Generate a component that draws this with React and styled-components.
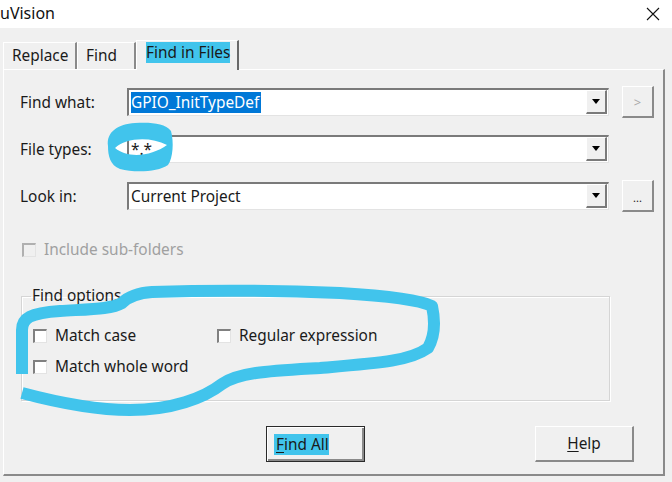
import React from "react";
import styled, { createGlobalStyle, css } from "styled-components";

const Global = createGlobalStyle`
  html, body { margin: 0; padding: 0; }
  body {
    background: #f0f0f0;
    font-family: "Noto Sans", "Open Sans", sans-serif;
    font-size: 15.4px;
    color: #1a1a1a;
    overflow: hidden;
  }
`;

const Window = styled.div`
  position: relative;
  width: 672px;
  height: 482px;
  background: #f0f0f0;
  overflow: hidden;
`;

const TitleBar = styled.div`
  height: 28px;
  background: #ffffff;
  display: flex;
  align-items: center;
  justify-content: space-between;
  padding: 0 12px 3px 0;
  box-sizing: border-box;
`;

const Title = styled.span`
  font-size: 16px;
  margin-left: 0;
  color: #111;
`;

const CloseIcon = styled.svg`
  width: 14px;
  height: 14px;
  margin-top: 3px;
`;

const Body = styled.div`
  padding: 12px 7px 0 3px;
`;

const TabStrip = styled.div`
  display: flex;
  align-items: flex-end;
  height: 29px;
  position: relative;
  z-index: 1;
`;

const Tab = styled.div`
  box-sizing: border-box;
  width: ${(p) => p.$w}px;
  height: ${(p) => (p.$active ? "30px" : "27px")};
  margin-bottom: ${(p) => (p.$active ? "-1px" : "0")};
  padding: ${(p) => (p.$active ? "2px 0 0 9px" : "3px 0 0 8px")};
  border-top: 1px solid #ffffff;
  border-left: 1px solid #ffffff;
  border-right: 2px solid #8a8a8a;
  background: #f0f0f0;
  white-space: nowrap;
  line-height: 20px;
  ${(p) =>
    p.$active &&
    css`
      border-right-color: #696969;
    `}
`;

const Marked = styled.span`
  background: #41c4ec;
  padding: ${(p) => p.$pad || "0"};
`;

const Panel = styled.div`
  box-sizing: border-box;
  width: 662px;
  height: 407px;
  border-top: 1px solid #ffffff;
  border-left: 1px solid #ffffff;
  border-right: 2px solid #8a8a8a;
  border-bottom: 2px solid #8a8a8a;
  padding: 18px 0 0 16px;
  display: flex;
  flex-direction: column;
`;

const FieldGrid = styled.div`
  display: grid;
  grid-template-columns: 94px 482px 32px;
  column-gap: 13px;
  grid-template-rows: repeat(3, 28px);
  row-gap: 19px;
  align-items: center;
`;

const Label = styled.label`
  white-space: nowrap;
  color: #1a1a1a;
`;

const Combo = styled.div`
  box-sizing: border-box;
  height: 28px;
  display: flex;
  align-items: stretch;
  background: #ffffff;
  border-top: 2px solid #7a7a7a;
  border-left: 2px solid #7a7a7a;
  border-right: 1px solid #e3e3e3;
  border-bottom: 1px solid #e3e3e3;
`;

const ComboText = styled.div`
  flex: 1;
  display: flex;
  align-items: center;
  padding-left: 2px;
  white-space: nowrap;
`;

const Selected = styled.span`
  background: #0078d7;
  color: #ffffff;
  line-height: 21px;
  padding-right: 2px;
`;

const DropButton = styled.div`
  width: 21px;
  box-sizing: border-box;
  margin: 0 1px 1px 0;
  background: #f0f0f0;
  border-top: 1px solid #ffffff;
  border-left: 1px solid #ffffff;
  border-right: 2px solid #7a7a7a;
  border-bottom: 2px solid #7a7a7a;
  display: flex;
  align-items: center;
  justify-content: center;
`;

const Arrow = styled.div`
  width: 0;
  height: 0;
  border-left: 4px solid transparent;
  border-right: 4px solid transparent;
  border-top: 5px solid #000;
`;

const SideButton = styled.div`
  box-sizing: border-box;
  width: 32px;
  height: 32px;
  align-self: center;
  background: #f0f0f0;
  border-top: 1px solid #ffffff;
  border-left: 1px solid #ffffff;
  border-right: 2px solid #8a8a8a;
  border-bottom: 2px solid #8a8a8a;
  display: flex;
  align-items: center;
  justify-content: center;
  font-size: ${(p) => (p.$small ? "11px" : "13px")};
  color: ${(p) => (p.$disabled ? "#a8a8a8" : "#1a1a1a")};
  padding-top: ${(p) => (p.$small ? "3px" : "0")};
`;

const CheckRow = styled.div`
  display: flex;
  align-items: center;
  gap: 8px;
  color: ${(p) => (p.$disabled ? "#a0a0a0" : "#1a1a1a")};
  white-space: nowrap;
`;

const Box = styled.span`
  box-sizing: border-box;
  width: 14px;
  height: 14px;
  background: ${(p) => (p.$disabled ? "#f0f0f0" : "#ffffff")};
  border-top: 2px solid ${(p) => (p.$disabled ? "#b0b0b0" : "#808080")};
  border-left: 2px solid ${(p) => (p.$disabled ? "#b0b0b0" : "#808080")};
  border-right: 1px solid #e3e3e3;
  border-bottom: 1px solid #e3e3e3;
`;

const SubFolders = styled(CheckRow)`
  margin: 29px 0 0 2px;
`;

const Group = styled.fieldset`
  box-sizing: border-box;
  width: 589px;
  height: 113px;
  margin: 28px 0 0 1px;
  padding: 16px 0 0 11px;
  border: 1px solid #d5d5d5;
  box-shadow: inset 1px 1px 0 #ffffff, 1px 1px 0 #ffffff;
  display: grid;
  grid-template-columns: 184px auto;
  grid-template-rows: 31px 31px;
  align-items: center;
  align-content: start;
`;

const Legend = styled.legend`
  padding: 0 1px;
  margin-left: -2px;
  line-height: 16px;
`;

const ButtonRow = styled.div`
  display: flex;
  margin: 25px 0 0 246px;
  gap: 170px;
`;

const PushButton = styled.div`
  box-sizing: border-box;
  width: 99px;
  height: 36px;
  background: #f0f0f0;
  display: flex;
  align-items: center;
  justify-content: center;
  border-top: 1px solid #ffffff;
  border-left: 1px solid #ffffff;
  border-right: 2px solid #8a8a8a;
  border-bottom: 2px solid #8a8a8a;
  ${(p) =>
    p.$default &&
    css`
      border: 1px solid #2a2a2a;
      box-shadow: inset 1px 1px 0 #ffffff, inset -2px -2px 0 #8a8a8a;
      justify-content: flex-start;
      padding-left: 7px;
    `}
`;

const Under = styled.span`
  text-decoration: underline;
  text-underline-offset: 2px;
`;

const Overlay = styled.svg`
  position: absolute;
  left: 0;
  top: 0;
  width: 672px;
  height: 482px;
  pointer-events: none;
`;

const MARK = "#41c4ec";

export default function App() {
  return (
    <>
      <Global />
      <Window>
        <TitleBar>
          <Title>uVision</Title>
          <CloseIcon viewBox="0 0 14 14">
            <path d="M1 1 L13 13 M13 1 L1 13" stroke="#111" strokeWidth="1.1" fill="none" />
          </CloseIcon>
        </TitleBar>
        <Body>
          <TabStrip>
            <Tab $w={74}>Replace</Tab>
            <Tab $w={59}>Find</Tab>
            <Tab $w={103} $active>
              <Marked>Find in Files</Marked>
            </Tab>
          </TabStrip>
          <Panel>
            <FieldGrid>
              <Label>Find what:</Label>
              <Combo>
                <ComboText>
                  <Selected>GPIO_InitTypeDef</Selected>
                </ComboText>
                <DropButton>
                  <Arrow />
                </DropButton>
              </Combo>
              <SideButton $disabled>&gt;</SideButton>

              <Label>File types:</Label>
              <Combo>
                <ComboText>*.*</ComboText>
                <DropButton>
                  <Arrow />
                </DropButton>
              </Combo>
              <span />

              <Label>Look in:</Label>
              <Combo>
                <ComboText>Current Project</ComboText>
                <DropButton>
                  <Arrow />
                </DropButton>
              </Combo>
              <SideButton $small>...</SideButton>
            </FieldGrid>

            <SubFolders $disabled>
              <Box $disabled />
              Include sub-folders
            </SubFolders>

            <Group>
              <Legend>Find options</Legend>
              <CheckRow>
                <Box />
                Match case
              </CheckRow>
              <CheckRow>
                <Box />
                Regular expression
              </CheckRow>
              <CheckRow>
                <Box />
                Match whole word
              </CheckRow>
            </Group>

            <ButtonRow>
              <PushButton $default>
                <Marked $pad="0 0 0 2px">
                  <Under>F</Under>ind All
                </Marked>
              </PushButton>
              <PushButton>
                <Under>H</Under>elp
              </PushButton>
            </ButtonRow>
          </Panel>
        </Body>

        <Overlay viewBox="0 0 672 482">
          <clipPath id="leftOfCombo">
            <rect x="0" y="0" width="127" height="482" />
          </clipPath>
          <path
            d="M115 148 C125 138 150 136 167 145 C152 156 128 159 115 148 Z"
            fill="#ffffff"
            clipPath="url(#leftOfCombo)"
          />
          <path
            fillRule="evenodd"
            fill={MARK}
            d="M108 146 C106 132 118 124 135 123 C150 122 165 123 171 131 C174 142 173 158 168 165 C158 172 135 173 120 169 C110 165 108 156 108 146 Z
               M115 148 C128 159 152 156 167 145 C150 136 125 138 115 148 Z"
          />
          <path
            d="M22 374 L22 330 C22 318 30 313 60 311 C92 309 112 309 122 303 C128 297 136 293 152 292 C210 290 270 290 340 293 C390 296 420 300 432 306 C435 320 435 336 428 348 C410 361 380 363 320 368 C270 371 240 372 222 384 C204 398 172 410 130 410 C90 410 52 401 22 393"
            fill="none"
            stroke={MARK}
            strokeWidth="12"
            strokeLinecap="butt"
            strokeLinejoin="round"
          />
        </Overlay>
      </Window>
    </>
  );
}
